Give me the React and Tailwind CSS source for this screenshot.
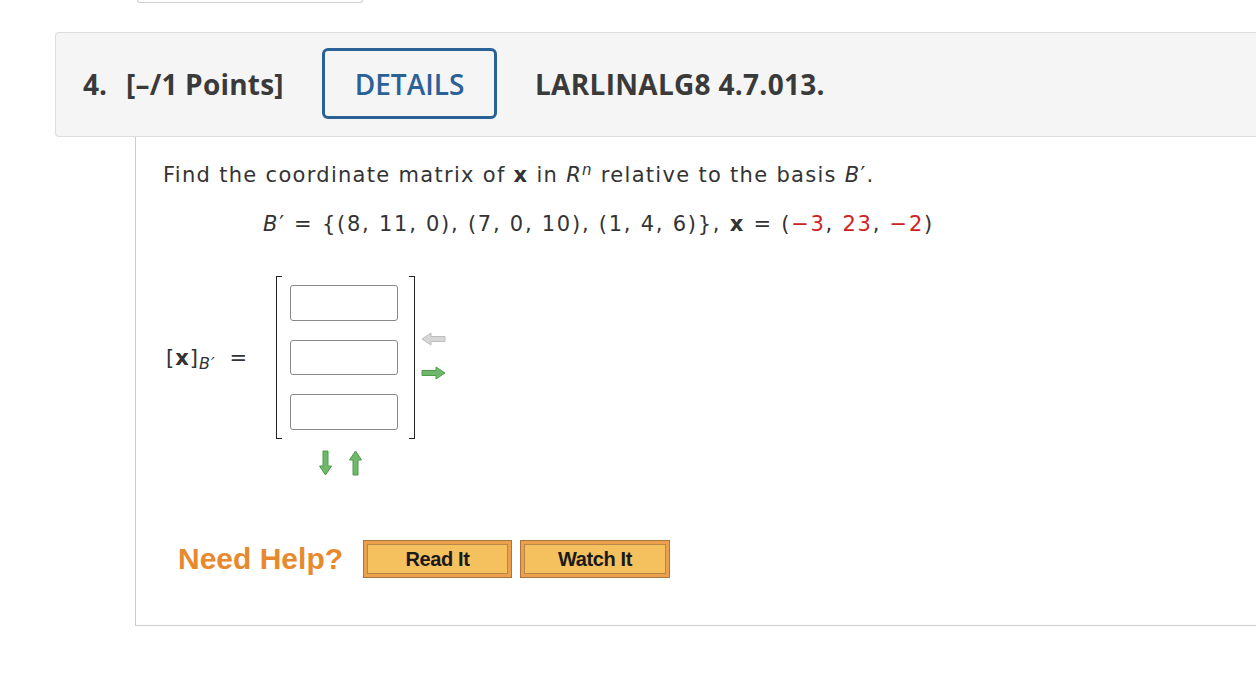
import React from 'react';

function ArrowH({ dir = 'right', color = 'green' }) {
  const fill = color === 'green' ? '#6fb86a' : '#d6d6d6';
  const stroke = color === 'green' ? '#4f9a4b' : '#bdbdbd';
  const d =
    dir === 'right'
      ? 'M1 4.5 H15 V1 L24 7 L15 13 V9.5 H1 Z'
      : 'M24 4.5 H10 V1 L1 7 L10 13 V9.5 H24 Z';
  return (
    <svg width="26" height="14" viewBox="0 0 26 14">
      <path d={d} fill={fill} stroke={stroke} strokeWidth="1" />
    </svg>
  );
}

function ArrowV({ dir = 'down' }) {
  const d =
    dir === 'down'
      ? 'M4 1 H9 V16 H12.5 L6.5 25 L0.5 16 H4 Z'
      : 'M4 25 H9 V10 H12.5 L6.5 1 L0.5 10 H4 Z';
  return (
    <svg width="13" height="26" viewBox="0 0 13 26">
      <path d={d} fill="#72b86c" stroke="#4f9a4b" strokeWidth="1" />
    </svg>
  );
}

function HelpButton({ label, width }) {
  return (
    <div className={`h-[38px] ${width} border border-[#a8773c] bg-[#eda04c] p-[3px]`}>
      <div className="h-full w-full border border-[#b8864a] bg-[#f5c05e] flex items-center justify-center text-[20px] font-bold text-[#1a1a1a] [font-family:'Liberation_Sans',Arial,sans-serif] tracking-[-0.4px]">
        {label}
      </div>
    </div>
  );
}

export default function App() {
  return (
    <div className="w-[1256px] h-[692px] bg-white overflow-hidden">
      <div className="ml-[137px] w-[226px] h-[3px] border-x border-b border-[#cfcfcf] rounded-b-[5px]" />

      <div className="ml-[55px] mt-[29px] h-[105px] bg-[#f5f5f5] border border-r-0 border-[#dddddd] rounded-l-[4px] flex items-center pl-[27px] pb-[2px] [font-family:'Open_Sans',sans-serif] text-[#3a3a3a]">
        <span className="w-[43px] text-[28px] font-bold">4.</span>
        <span className="w-[196px] text-[28px] font-bold tracking-[0.2px]">[–/1 Points]</span>
        <div className="w-[175px] h-[71px] border-[3px] border-[#2a6196] rounded-[6px] flex items-center justify-center text-[#2a6196] text-[28px] font-semibold">
          DETAILS
        </div>
        <span className="ml-[38px] text-[28px] font-bold tracking-[0.3px]">LARLINALG8 4.7.013.</span>
      </div>

      <div className="ml-[135px] h-[489px] border-l border-b border-[#cccccc] pl-[27px] pt-[22px] [font-family:'DejaVu_Sans',Verdana,sans-serif] text-[#333333] text-[21px]">
        <p className="leading-[32px] tracking-[1.3px]">
          Find the coordinate matrix of <b>x</b> in <i>R</i>
          <sup className="italic text-[15px]">n</sup> relative to the basis <i>B</i>′.
        </p>
        <p className="ml-[100px] mt-[17px] leading-[32px] tracking-[1.75px]">
          <i>B</i>′ = {'{'}(8, 11, 0), (7, 0, 10), (1, 4, 6){'}'}, <b>x</b> = (
          <span className="text-[#cc2222]">−3</span>, <span className="text-[#cc2222]">23</span>,{' '}
          <span className="text-[#cc2222]">−2</span>)
        </p>

        <div className="mt-[36px] flex items-start">
          <div className="mt-[67px] ml-[3px] w-[110px] flex items-baseline tracking-[1px]">
            <span>
              [<b>x</b>]
            </span>
            <sub className="italic text-[16px]">B′</sub>
            <span className="ml-[14px]">=</span>
          </div>
          <div className="flex flex-col items-center">
            <div className="flex items-start">
              <div className="h-[163px] w-[6px] border border-r-0 border-[#222]" />
              <div className="flex flex-col gap-[19px] py-[9px] pl-[8px] pr-[11px]">
                <div className="w-[108px] h-[36px] border border-[#8a8a8a] rounded-[3px] bg-white" />
                <div className="w-[108px] h-[35px] border border-[#8a8a8a] rounded-[3px] bg-white" />
                <div className="w-[108px] h-[36px] border border-[#8a8a8a] rounded-[3px] bg-white" />
              </div>
              <div className="h-[163px] w-[6px] border border-l-0 border-[#222]" />
              <div className="ml-[6px] mt-[56px] flex flex-col gap-[20px]">
                <ArrowH dir="left" color="gray" />
                <ArrowH dir="right" color="green" />
              </div>
            </div>
            <div className="mt-[11px] mr-[42px] flex gap-[17px]">
              <ArrowV dir="down" />
              <ArrowV dir="up" />
            </div>
          </div>
        </div>

        <div className="mt-[60px] ml-[15px] flex items-center">
          <span className="w-[185px] [font-family:'Liberation_Sans',Arial,sans-serif] font-bold text-[30px] text-[#e8892e]">
            Need Help?
          </span>
          <div className="flex gap-[8px]">
            <HelpButton label="Read It" width="w-[149px]" />
            <HelpButton label="Watch It" width="w-[150px]" />
          </div>
        </div>
      </div>
    </div>
  );
}
